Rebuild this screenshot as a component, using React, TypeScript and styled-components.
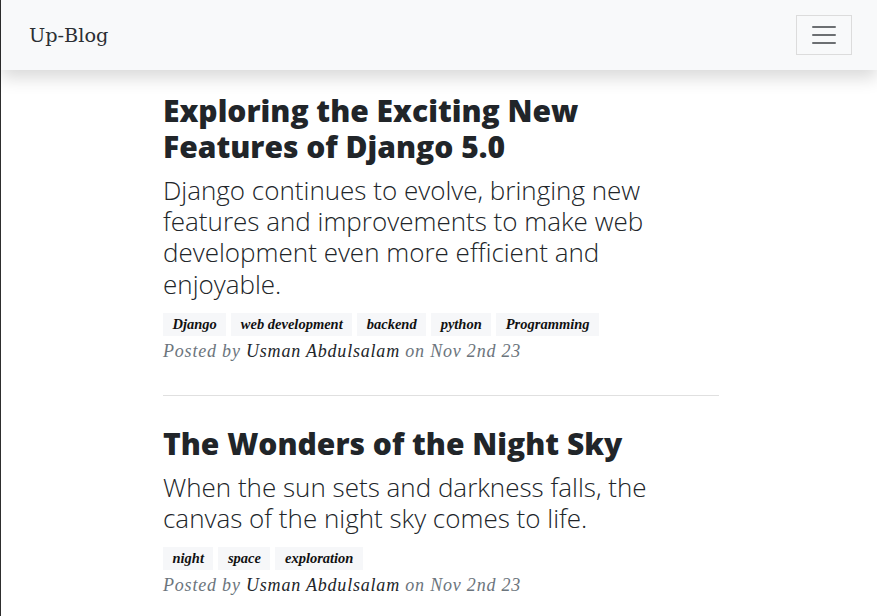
import React from "react";
import styled, { createGlobalStyle } from "styled-components";

const GlobalStyle = createGlobalStyle`
  html, body {
    margin: 0;
    padding: 0;
    background: #ffffff;
  }
  body {
    font-family: "Open Sans", "Liberation Sans", sans-serif;
    color: #212529;
  }
  * { box-sizing: border-box; }
`;

const Page = styled.div`
  min-height: 100vh;
  border-left: 1px solid #2e2e2e;
  background: #ffffff;
`;

const Navbar = styled.nav`
  position: relative;
  z-index: 1;
  height: 70px;
  background: #f8f9fa;
  display: flex;
  align-items: center;
  justify-content: space-between;
  padding: 0 25px 0 28px;
  box-shadow: 0 8px 16px rgba(0, 0, 0, 0.15);
`;

const Brand = styled.a`
  font-family: "DejaVu Serif", "Liberation Serif", serif;
  font-size: 19.3px;
  color: #2b2f33;
  text-decoration: none;
  line-height: 1;
  margin-top: 2px;
`;

const Toggler = styled.button`
  width: 56px;
  height: 40px;
  padding: 4px 12px;
  border: 1px solid #dcdcdc;
  border-radius: 0;
  background: transparent;
  display: flex;
  align-items: center;
  justify-content: center;
`;

const Main = styled.main`
  display: flex;
  justify-content: center;
  padding: 23px 0 40px 4px;
`;

const Column = styled.div`
  width: 556px;
`;

const Post = styled.article``;

const Title = styled.h2`
  margin: 0 0 10px;
  font-family: "Open Sans", sans-serif;
  font-weight: 800;
  font-size: 30px;
  line-height: 36px;
  color: #212529;
`;

const Subtitle = styled.h3`
  margin: 0 0 13px;
  font-family: "Open Sans", sans-serif;
  font-weight: 300;
  font-size: 26px;
  line-height: 31.2px;
  color: #212529;
`;

const Tags = styled.div`
  display: flex;
  flex-wrap: wrap;
  gap: 5px;
`;

const Tag = styled.span`
  display: inline-block;
  height: 23px;
  line-height: 23px;
  padding: 0 9.5px;
  background: #f6f7f9;
  font-family: "Liberation Serif", serif;
  font-style: italic;
  font-weight: 700;
  font-size: 14.5px;
  color: #111;
`;

const Meta = styled.p`
  margin: 2px 0 0;
  font-family: "Liberation Serif", serif;
  font-style: italic;
  font-size: 18px;
  line-height: 27px;
  letter-spacing: 0.8px;
  color: #6c757d;
`;

const Author = styled.span`
  color: #212529;
`;

const Divider = styled.hr`
  margin: 30px 0 30px;
  border: 0;
  border-top: 1px solid #e0e0e0;
`;

const HamburgerIcon = () => (
  <svg width="30" height="30" viewBox="0 0 30 30" aria-hidden="true">
    <path
      d="M4 7h22M4 15h22M4 23h22"
      stroke="rgba(33,37,41,0.65)"
      strokeWidth="2"
      strokeLinecap="round"
      fill="none"
    />
  </svg>
);

type PostData = {
  title: string;
  subtitle: string;
  tags: string[];
  author: string;
  date: string;
};

const posts: PostData[] = [
  {
    title: "Exploring the Exciting New Features of Django 5.0",
    subtitle:
      "Django continues to evolve, bringing new features and improvements to make web development even more efficient and enjoyable.",
    tags: ["Django", "web development", "backend", "python", "Programming"],
    author: "Usman Abdulsalam",
    date: "Nov 2nd 23",
  },
  {
    title: "The Wonders of the Night Sky",
    subtitle:
      "When the sun sets and darkness falls, the canvas of the night sky comes to life.",
    tags: ["night", "space", "exploration"],
    author: "Usman Abdulsalam",
    date: "Nov 2nd 23",
  },
];

export default function App() {
  return (
    <>
      <GlobalStyle />
      <Page>
        <Navbar>
          <Brand href="#">Up-Blog</Brand>
          <Toggler aria-label="Toggle navigation">
            <HamburgerIcon />
          </Toggler>
        </Navbar>
        <Main>
          <Column>
            {posts.map((p, i) => (
              <React.Fragment key={p.title}>
                {i > 0 && <Divider />}
                <Post>
                  <Title>{p.title}</Title>
                  <Subtitle>{p.subtitle}</Subtitle>
                  <Tags>
                    {p.tags.map((t) => (
                      <Tag key={t}>{t}</Tag>
                    ))}
                  </Tags>
                  <Meta>
                    Posted by <Author>{p.author}</Author> on {p.date}
                  </Meta>
                </Post>
              </React.Fragment>
            ))}
          </Column>
        </Main>
      </Page>
    </>
  );
}
